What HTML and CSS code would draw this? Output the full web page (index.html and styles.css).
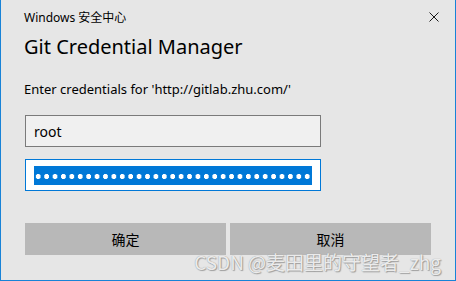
FILE: index.html
```html
<!DOCTYPE html>
<html lang="zh-CN">
<head>
    <meta charset="UTF-8">
    <meta name="viewport" content="width=device-width, initial-scale=1.0">
    <title>Windows 安全中心</title>
    <link rel="stylesheet" href="styles.css">
</head>
<body>
    <div class="window">
        <div class="titlebar">
            <span class="title">Windows 安全中心</span>
            <span class="close">
                <svg width="10" height="10" viewBox="0 0 10 10">
                    <path d="M0.5 0.5 L9.5 9.5 M9.5 0.5 L0.5 9.5" stroke="#1a1a1a" stroke-width="1" fill="none"/>
                </svg>
            </span>
        </div>

        <div class="content">
            <h1>Git Credential Manager</h1>
            <p class="prompt">Enter credentials for 'http://gitlab.zhu.com/'</p>

            <div class="field">root</div>
            <div class="field focused">
                <span class="dots"></span>
            </div>

            <div class="buttons">
                <button type="button">确定</button>
                <button type="button">取消</button>
            </div>
        </div>

        <div class="watermark">CSDN @麦田里的守望者_zhg</div>
    </div>
</body>
</html>
```

FILE: styles.css
```css
body {
    margin: 0;
    font-family: "Noto Sans", "Noto Sans CJK SC", sans-serif;
    color: #000;
}

.window {
    position: relative;
    box-sizing: border-box;
    width: 456px;
    height: 281px;
    background-color: #e6e6e6;
    border: 1px solid #1883d7;
    border-top: none;
}

.titlebar {
    display: flex;
    align-items: center;
    justify-content: space-between;
    height: 33px;
    padding: 0 16px 0 23px;
}

.title {
    font-size: 12px;
}

.close {
    display: flex;
}

.content {
    padding: 0 24px;
}

h1 {
    margin: 0 0 0 -1px;
    font-size: 20px;
    font-weight: normal;
    line-height: 28px;
}

.prompt {
    margin: 20px 0 0 -1px;
    font-size: 13px;
    line-height: 16px;
}

.field {
    box-sizing: border-box;
    width: 296px;
    height: 32px;
    margin-top: 18px;
    padding: 0 8px;
    display: flex;
    align-items: center;
    background-color: #f0f0f0;
    border: 1px solid #7a7a7a;
    font-size: 14px;
}

.field.focused {
    margin-top: 12px;
    background-color: #fff;
    border-color: #0078d7;
}

.dots {
    display: block;
    width: 278px;
    height: 19px;
    background-color: #0078d7;
    background-image: radial-gradient(circle, #fff 2.3px, transparent 2.8px);
    background-size: 8.42px 19px;
    background-position: 0 1px;
}

.buttons {
    display: flex;
    gap: 4px;
    margin-top: 32px;
}

button {
    width: 201px;
    height: 32px;
    padding: 0;
    border: none;
    background-color: #b8b8b8;
    font-family: "Noto Sans CJK SC", sans-serif;
    font-size: 14px;
    color: #000;
}

.watermark {
    position: absolute;
    right: 14px;
    bottom: 9px;
    font-family: "Noto Sans CJK SC", sans-serif;
    font-size: 19px;
    line-height: 19px;
    color: rgba(248, 248, 248, 0.9);
    text-shadow: 0 0 1px #8a8a8a, 1px 1px 1px #a0a0a0;
}
```
